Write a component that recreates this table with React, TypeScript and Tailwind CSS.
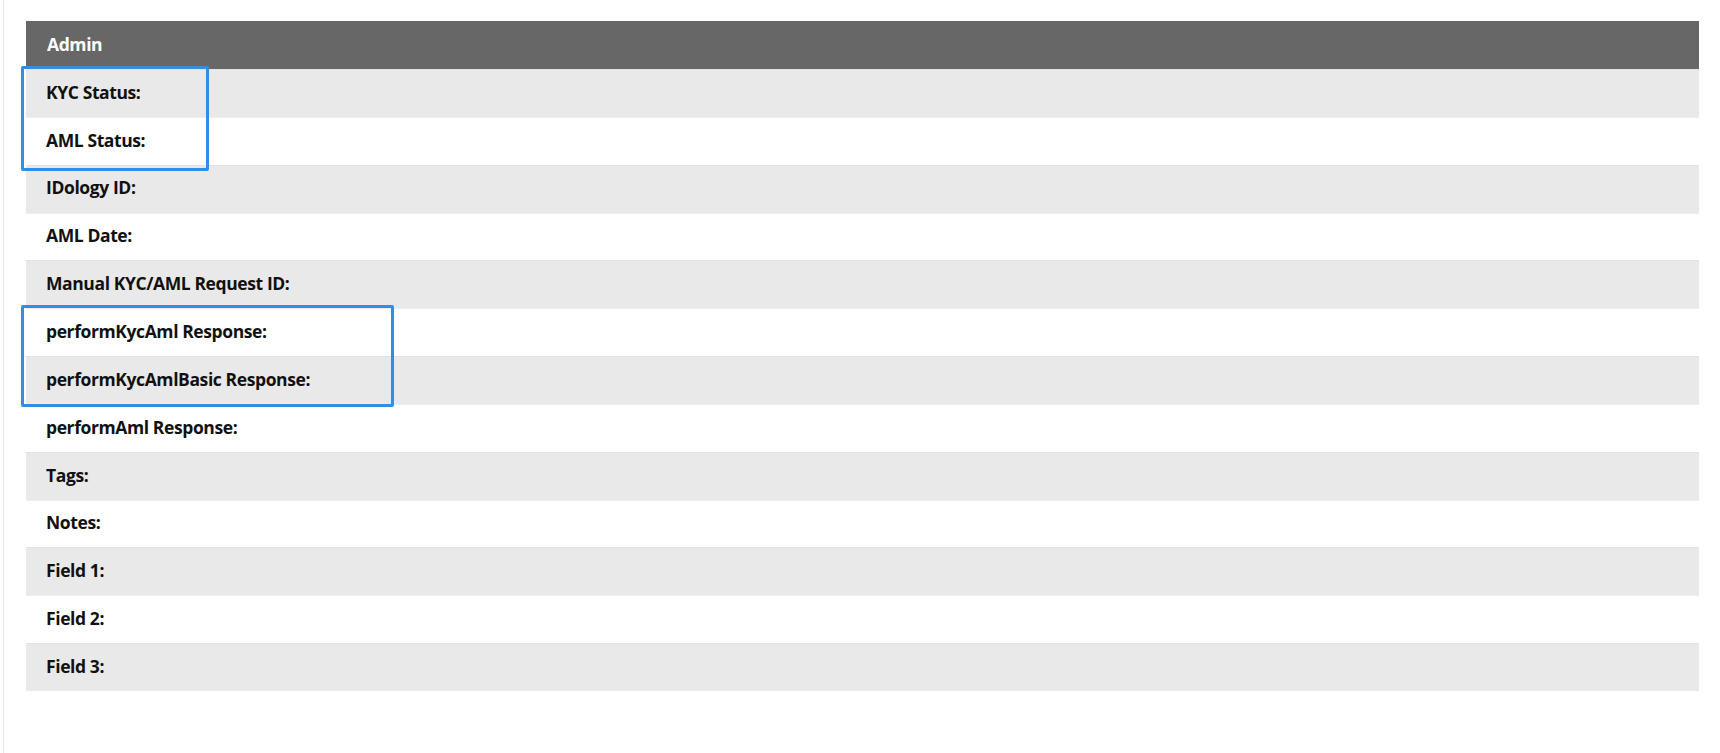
import React from 'react';

const rows = [
  'KYC Status:',
  'AML Status:',
  'IDology ID:',
  'AML Date:',
  'Manual KYC/AML Request ID:',
  'performKycAml Response:',
  'performKycAmlBasic Response:',
  'performAml Response:',
  'Tags:',
  'Notes:',
  'Field 1:',
  'Field 2:',
  'Field 3:',
];

export default function App() {
  return (
    <div className="relative min-h-[753px] w-full bg-white font-['Open_Sans',sans-serif]">
      <div className="min-h-[753px] ml-[3px] border-l border-[#e6e6e6] pt-[21px] pl-[22px] pr-[21px]">
        {/* panel */}
        <div className="w-full">
          <div className="h-[48px] bg-[#676767] flex items-center pl-[21px] pb-[2px] text-white text-[17.5px] font-bold tracking-[-0.4px]">
            Admin
          </div>
          {rows.map((label, i) => (
            <div
              key={label}
              className={
                i % 2 === 0
                  ? 'h-[47.85px] bg-[#e9e9e9] border-t border-[#e2e2e2] flex items-center pl-[20px] pb-[3px]'
                  : 'h-[47.85px] bg-white border-t border-[#eeeeee] flex items-center pl-[20px] pb-[3px]'
              }
            >
              <span className="text-[17.5px] font-bold text-[#111111] tracking-[-0.4px]">{label}</span>
            </div>
          ))}
        </div>
      </div>

      {/* highlight boxes */}
      <div className="absolute left-[21px] top-[66px] w-[188px] h-[105px] border-[3px] border-[#2f8ee8] rounded-[2px] pointer-events-none" />
      <div className="absolute left-[21px] top-[305px] w-[373px] h-[102px] border-[3px] border-[#2f8ee8] rounded-[2px] pointer-events-none" />
    </div>
  );
}
